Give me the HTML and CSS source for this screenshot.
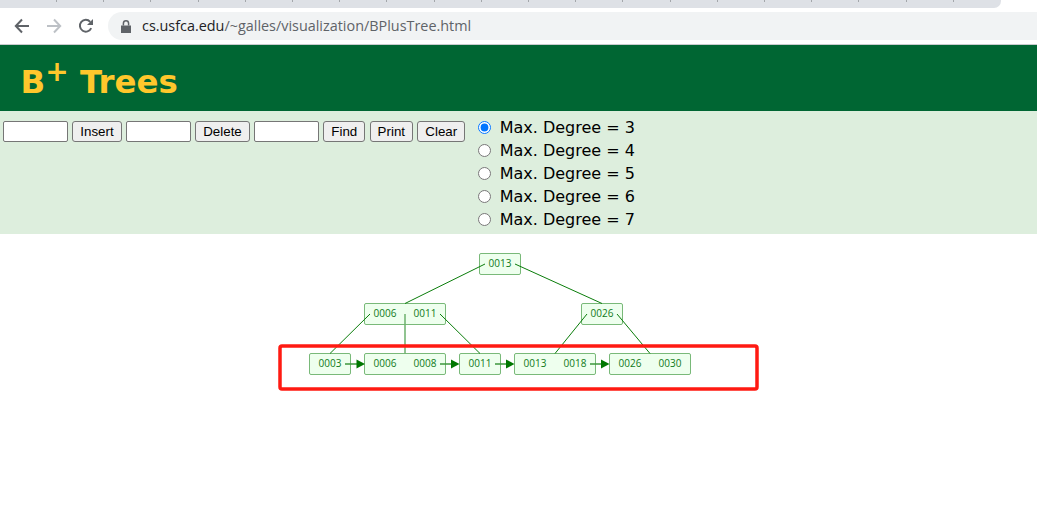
FILE: index.html
```html
<!DOCTYPE html>
<html>
<head>
    <meta charset="utf-8">
    <title>B+ Trees</title>
    <link rel="stylesheet" href="styles.css">
</head>
<body>
    <div class="tabstrip"><div class="tabticks"></div></div>
    <div class="toolbar">
        <svg class="navicon" width="16" height="16" viewBox="0 0 16 16"><path class="nav" d="M15 8H2M8 1.500L1.800 8L8 14.500"/></svg>
        <svg class="navicon" width="16" height="16" viewBox="0 0 16 16"><path class="nav off" d="M1 8H14M8 1.500L14.200 8L8 14.500"/></svg>
        <svg class="navicon" width="16" height="16" viewBox="0 0 16 16"><path class="nav" d="M13.200 10.200A5.900 5.900 0 1 1 12.200 3.800"/><path class="navfill" d="M15 1V7H9Z"/></svg>
        <div class="omnibox">
            <svg class="lock" width="10" height="13" viewBox="0 0 10 13"><path class="navfill" d="M0 5.500H10V13H0Z"/><path class="nav thin" d="M2.400 5.500V3.400A2.600 2.600 0 0 1 7.600 3.400V5.500"/></svg>
            <span class="host">cs.usfca.edu</span><span class="path">/~galles/visualization/BPlusTree.html</span>
        </div>
    </div>
    <div class="header">
        <h1>B<sup>+</sup> Trees</h1>
    </div>
    <div class="controls">
        <div class="algo-row">
            <input type="text" class="field"><button>Insert</button>
            <input type="text" class="field"><button>Delete</button>
            <input type="text" class="field"><button>Find</button>
            <button>Print</button>
            <button>Clear</button>
        </div>
        <div class="degrees">
            <label><input type="radio" name="degree" checked>Max. Degree = 3</label>
            <label><input type="radio" name="degree">Max. Degree = 4</label>
            <label><input type="radio" name="degree">Max. Degree = 5</label>
            <label><input type="radio" name="degree">Max. Degree = 6</label>
            <label><input type="radio" name="degree">Max. Degree = 7</label>
        </div>
    </div>
    <!-- tree canvas, coordinates are page coordinates -->
    <svg class="tree" width="1037" height="295" viewBox="0 234 1037 295">
        <g class="node">
            <rect x="479.500" y="253.500" width="41" height="21" rx="1.500"/>
            <rect x="364.500" y="303.500" width="81" height="21" rx="1.500"/>
            <rect x="581.500" y="303.500" width="41" height="21" rx="1.500"/>
            <rect x="309.500" y="353.500" width="41" height="21" rx="1.500"/>
            <rect x="364.500" y="353.500" width="81" height="21" rx="1.500"/>
            <rect x="459.500" y="353.500" width="41" height="21" rx="1.500"/>
            <rect x="514.500" y="353.500" width="81" height="21" rx="1.500"/>
            <rect x="609.500" y="353.500" width="81" height="21" rx="1.500"/>
        </g>
        <g class="edge">
            <line x1="485" y1="264" x2="405" y2="303.500"/>
            <line x1="515" y1="264" x2="602" y2="303.500"/>
            <line x1="370" y1="314" x2="330" y2="353.500"/>
            <line x1="440" y1="314" x2="480" y2="353.500"/>
            <line x1="587" y1="314" x2="555" y2="353.500"/>
            <line x1="617" y1="314" x2="650" y2="353.500"/>
        </g>
        <line class="edge-mid" x1="405" y1="314" x2="405" y2="353.500"/>
        <g class="link">
            <line x1="345" y1="364" x2="358" y2="364"/>
            <line x1="440" y1="364" x2="453" y2="364"/>
            <line x1="495" y1="364" x2="508" y2="364"/>
            <line x1="590" y1="364" x2="603" y2="364"/>
        </g>
        <g class="arrow">
            <path d="M356.500 359.500L365 364L356.500 368.500Z"/>
            <path d="M451 359.500L459.500 364L451 368.500Z"/>
            <path d="M506 359.500L514.500 364L506 368.500Z"/>
            <path d="M601 359.500L609.500 364L601 368.500Z"/>
        </g>
        <g class="key">
            <text x="500" y="267">0013</text>
            <text x="385" y="317">0006</text>
            <text x="425" y="317">0011</text>
            <text x="602" y="317">0026</text>
            <text x="330" y="367">0003</text>
            <text x="385" y="367">0006</text>
            <text x="425" y="367">0008</text>
            <text x="480" y="367">0011</text>
            <text x="535" y="367">0013</text>
            <text x="575" y="367">0018</text>
            <text x="630" y="367">0026</text>
            <text x="670" y="367">0030</text>
        </g>
        <rect class="callout" x="280" y="346" width="477" height="43" rx="2"/>
    </svg>
</body>
</html>
```
FILE: styles.css
```css
html, body {
    margin: 0;
    height: 529px;
    overflow: hidden;
    background: #fff;
}

.tabstrip {
    width: 1001px;
    height: 8px;
    background: #dee1e6;
    border-bottom-right-radius: 7px;
}

.tabticks {
    height: 2px;
    margin-left: 56px;
    margin-right: 47px;
    background: repeating-linear-gradient(to right, #a4a7ab 0, #a4a7ab 1px, transparent 1px, transparent 47.200px);
}

.toolbar {
    height: 36px;
    display: flex;
    align-items: center;
    padding-left: 14px;
    border-bottom: 1px solid #c9cbce;
}

.navicon {
    margin-right: 16px;
    flex: none;
}

.nav {
    fill: none;
    stroke: #5f6368;
    stroke-width: 2;
}

.nav.off {
    stroke: #bdc1c6;
}

.nav.thin {
    stroke-width: 1.500;
}

.navfill {
    fill: #5f6368;
}

.omnibox {
    flex: 1;
    height: 28px;
    margin-left: -2px;
    padding-left: 13px;
    display: flex;
    align-items: center;
    background: #f1f3f4;
    border-radius: 14px 0 0 14px;
    font-family: "Open Sans", sans-serif;
    font-size: 14.400px;
}

.lock {
    margin-right: 11px;
}

.host {
    color: #202124;
    margin-bottom: 2px;
}

.path {
    color: #5f6368;
    margin-bottom: 2px;
}

.header {
    height: 66px;
    background: #006633;
    padding-left: 20.500px;
    display: flex;
    align-items: center;
}

.header h1 {
    margin: 0;
    padding-top: 8px;
    font-family: "DejaVu Sans", sans-serif;
    font-size: 32.400px;
    font-weight: bold;
    line-height: 58px;
    color: #ffc72c;
}

.header sup {
    font-size: 28px;
    line-height: 0;
    vertical-align: 12px;
}

.controls {
    height: 123px;
    background: #ddeedd;
    display: flex;
    align-items: flex-start;
}

.algo-row {
    display: flex;
    align-items: center;
    gap: 4.300px;
    padding: 10px 0 0 3px;
}

.algo-row .field {
    width: 65px;
    height: 21px;
    box-sizing: border-box;
    margin: 0;
    padding: 1px 2px;
    border: 1px solid #767676;
    border-radius: 2px;
    background: #fff;
}

.algo-row button {
    height: 21px;
    margin: 0;
    padding: 1px 7px;
    box-sizing: border-box;
    border: 1px solid #767676;
    border-radius: 3px;
    background: #efefef;
    color: #000;
    font-family: "Liberation Sans", sans-serif;
    font-size: 13.333px;
}

.degrees {
    display: flex;
    flex-direction: column;
    margin-left: 12.500px;
    padding-top: 5px;
}

.degrees label {
    display: flex;
    align-items: center;
    height: 23px;
    font-family: "DejaVu Sans", sans-serif;
    font-size: 16px;
    color: #000;
}

.degrees input {
    width: 13px;
    height: 13px;
    margin: 0 9px 0 0;
}

.tree {
    display: block;
}

.node rect {
    fill: #eeffee;
    stroke: #79b979;
    stroke-width: 1;
}

.edge line {
    stroke: #0a7d0a;
    stroke-width: 1;
}

.edge-mid {
    stroke: #6db06d;
    stroke-width: 1.500;
}

.link line {
    stroke: #3d973d;
    stroke-width: 1.500;
}

.arrow path {
    fill: #007700;
}

.key text {
    font-family: "Open Sans", sans-serif;
    font-size: 10px;
    fill: #107a20;
    text-anchor: middle;
}

.callout {
    fill: none;
    stroke: #ff1a12;
    stroke-width: 3.500;
}
```
